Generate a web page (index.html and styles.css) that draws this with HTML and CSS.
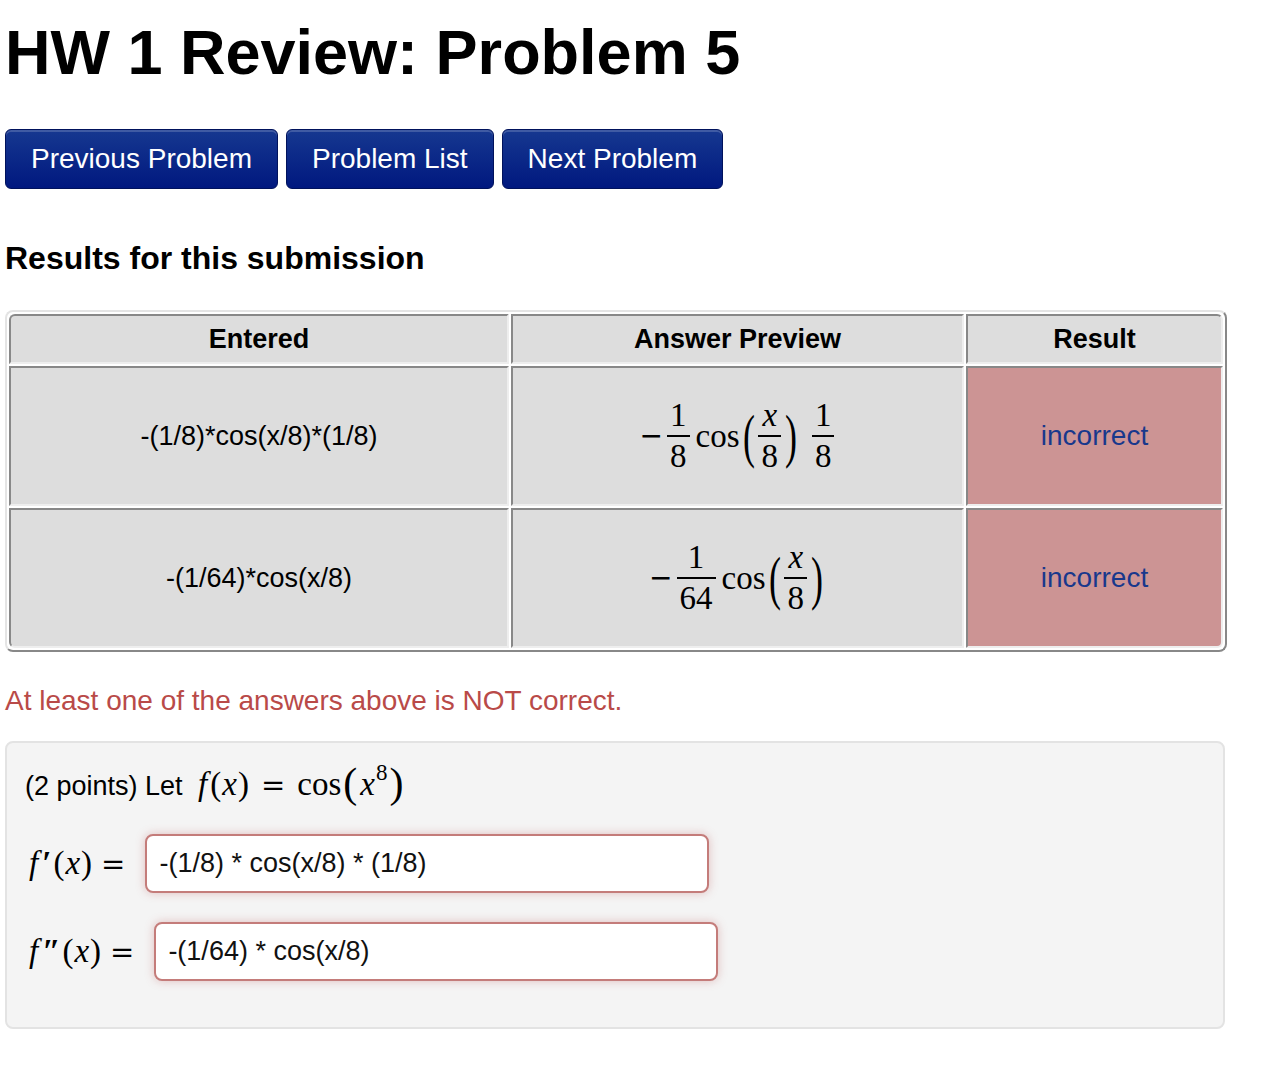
FILE: index.html
```html
<!DOCTYPE html>
<html lang="en">

<head>
	<meta charset="UTF-8">
	<meta name="viewport" content="width=device-width, initial-scale=1.0">
	<title>HW 1 Review: Problem 5</title>
	<link rel="stylesheet" href="styles.css">
</head>

<body>
	<h1 class="page-title">HW 1 Review: Problem 5</h1>

	<div class="nav-buttons">
		<a class="nav-btn" href="#">Previous Problem</a>
		<a class="nav-btn" href="#">Problem List</a>
		<a class="nav-btn" href="#">Next Problem</a>
	</div>

	<h2 class="results-title">Results for this submission</h2>

	<table class="attempt-results">
		<tr>
			<th class="col-entered">Entered</th>
			<th class="col-preview">Answer Preview</th>
			<th class="col-result">Result</th>
		</tr>
		<tr>
			<td>-(1/8)*cos(x/8)*(1/8)</td>
			<td>
				<span class="math">
					<span class="mo minus">&minus;</span>
					<span class="frac"><span class="num">1</span><span class="den">8</span></span>
					<span class="mo fn">cos</span>
					<span class="big-paren">(</span>
					<span class="frac"><span class="num"><i>x</i></span><span class="den">8</span></span>
					<span class="big-paren">)</span>
					<span class="frac spaced"><span class="num">1</span><span class="den">8</span></span>
				</span>
			</td>
			<td class="incorrect">incorrect</td>
		</tr>
		<tr>
			<td>-(1/64)*cos(x/8)</td>
			<td>
				<span class="math">
					<span class="mo minus">&minus;</span>
					<span class="frac"><span class="num">1</span><span class="den">64</span></span>
					<span class="mo fn">cos</span>
					<span class="big-paren">(</span>
					<span class="frac"><span class="num"><i>x</i></span><span class="den">8</span></span>
					<span class="big-paren">)</span>
				</span>
			</td>
			<td class="incorrect">incorrect</td>
		</tr>
	</table>

	<div class="attempt-message">At least one of the answers above is NOT correct.</div>

	<div class="problem">
		<div class="intro">
			(2 points) Let
			<span class="inline-math intro-math"><i class="fn-f">f</i>(<i>x</i>)<span class="eq">=</span>cos<span class="mid-paren">(</span><i>x</i><sup>8</sup><span class="mid-paren">)</span></span>
		</div>

		<div class="answer-row">
			<span class="inline-math label"><i class="fn-f">f</i><span class="prime">&prime;</span>(<i>x</i>)<span class="eq">=</span></span>
			<input class="answer incorrect-answer" type="text" value="-(1/8) * cos(x/8) * (1/8)">
		</div>

		<div class="answer-row second">
			<span class="inline-math label"><i class="fn-f">f</i><span class="prime">&Prime;</span>(<i>x</i>)<span class="eq">=</span></span>
			<input class="answer incorrect-answer" type="text" value="-(1/64) * cos(x/8)">
		</div>
	</div>
</body>

</html>
```

FILE: styles.css
```css
* {
	box-sizing: border-box;
}

body {
	margin: 0;
	padding: 0 0 0 5px;
	font-family: "Liberation Sans", Arial, Helvetica, sans-serif;
	font-size: 27px;
	color: #000;
	background: #fff;
}

.page-title {
	margin: 16px 0 0;
	font-size: 63px;
	line-height: 72px;
	font-weight: bold;
}

.nav-buttons {
	display: flex;
	gap: 8px;
	margin-top: 41px;
}

.nav-btn {
	display: block;
	height: 60px;
	padding: 0 25px;
	line-height: 58px;
	font-size: 28px;
	color: #fff;
	text-decoration: none;
	background: linear-gradient(to bottom, #163890, #00187f);
	border: 1px solid #00125c;
	border-radius: 6px;
	box-shadow: inset 0 2px 0 rgba(255, 255, 255, 0.18);
}

.results-title {
	margin: 51px 0 0;
	font-size: 32px;
	line-height: 37px;
	font-weight: bold;
}

/* results table */
.attempt-results {
	margin-top: 33px;
	width: 1222px;
	table-layout: fixed;
	border-collapse: separate;
	border-spacing: 2px;
	border: 2px solid;
	border-color: #e4e4e4 #888 #888 #e4e4e4;
	border-radius: 8px;
}

.attempt-results th,
.attempt-results td {
	background: #ddd;
	text-align: center;
	border: 2px solid;
	border-color: #888 #eee #eee #888;
	padding: 0 10px;
}

.attempt-results th {
	height: 50px;
	font-weight: bold;
	line-height: 30px;
}

.attempt-results td {
	height: 140px;
	vertical-align: middle;
}

.col-entered {
	width: 500px;
}

.col-preview {
	width: 453px;
}

.col-result {
	width: 257px;
}

.attempt-results tr:first-child th:first-child {
	border-top-left-radius: 6px;
}

.attempt-results tr:first-child th:last-child {
	border-top-right-radius: 6px;
}

.attempt-results tr:last-child td:first-child {
	border-bottom-left-radius: 6px;
}

.attempt-results tr:last-child td:last-child {
	border-bottom-right-radius: 6px;
}

.attempt-results td.incorrect {
	background: #cc9494;
	color: #18388c;
	font-size: 28px;
}

/* typeset math */
.math {
	display: inline-flex;
	align-items: center;
	font-family: "Liberation Serif", "Times New Roman", serif;
	font-size: 33px;
	line-height: 1;
}

.math i,
.inline-math i {
	font-style: italic;
}

.minus {
	font-family: "DejaVu Sans", sans-serif;
	font-size: 28px;
	margin-right: 3px;
}

.frac {
	display: inline-flex;
	flex-direction: column;
	align-items: center;
	margin: 0 1px;
}

.frac.spaced {
	margin-left: 12px;
}

.frac .num {
	padding: 0 3px 3px;
}

.frac .den {
	padding: 3px 3px 0;
	border-top: 2px solid #000;
}

.fn {
	margin: 0 0 0 5px;
}

.big-paren {
	font-size: 60px;
	line-height: 1;
	transform: scaleX(0.6);
	margin: 0 -1px;
}

.attempt-message {
	margin-top: 33px;
	line-height: 31px;
	font-size: 28px;
	color: #b94a48;
}

/* problem body */
.problem {
	margin-top: 25px;
	width: 1220px;
	padding: 18px 18px 46px;
	background: #f4f4f4;
	border: 2px solid #e3e3e3;
	border-radius: 8px;
}

.intro {
	height: 46px;
	line-height: 46px;
	white-space: nowrap;
}

.inline-math {
	font-family: "Liberation Serif", "Times New Roman", serif;
	font-size: 33px;
}

.inline-math i {
	margin: 0 1px;
}

.inline-math .fn-f {
	margin: 0 3px 0 4px;
}

.intro-math {
	margin-left: 4px;
}

.intro-math .eq {
	margin: 0 12px;
}

.eq {
	font-family: "DejaVu Serif", serif;
	font-size: 29px;
	margin: 0 9px;
}

.mid-paren {
	font-size: 42px;
	line-height: 0.8;
	vertical-align: -2px;
	margin: 0 2px;
}

.inline-math sup {
	font-size: 23px;
	line-height: 0;
	vertical-align: 15px;
}

.prime {
	margin: 0 2px 0 1px;
	font-weight: bold;
}

.answer-row {
	display: flex;
	align-items: center;
	margin-top: 27px;
	gap: 11px;
}

.answer-row.second {
	margin-top: 29px;
}

.label {
	line-height: 1;
}

.answer {
	width: 564px;
	height: 59px;
	padding: 0 12px;
	font-family: "Liberation Sans", Arial, Helvetica, sans-serif;
	font-size: 27px;
	color: #111;
	background: #fff;
	border: 2px solid #c47c7a;
	border-radius: 8px;
	outline: none;
}

.incorrect-answer {
	box-shadow: 0 0 10px rgba(190, 90, 90, 0.35);
}
```
